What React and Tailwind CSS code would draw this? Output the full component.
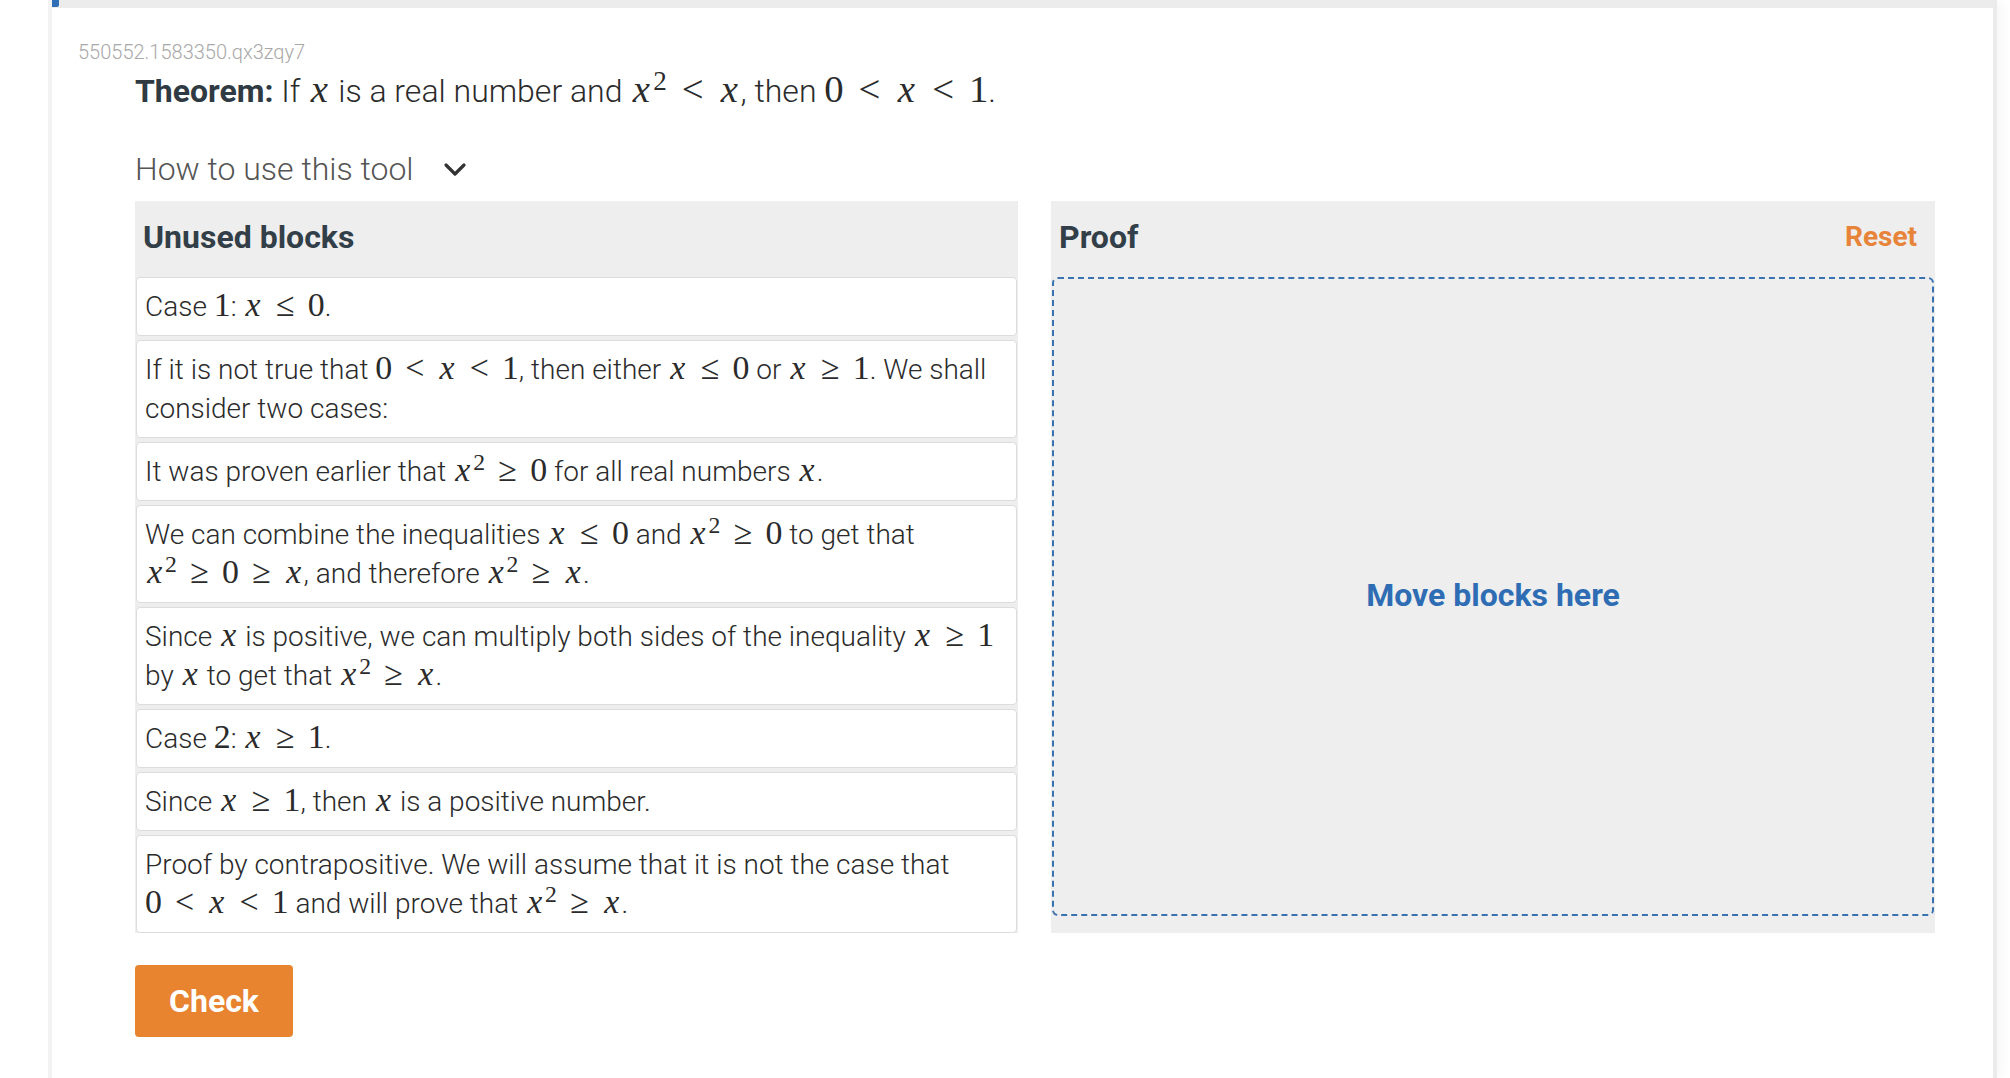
import React from "react";

function M({ t }) {
  const out = [];
  for (let i = 0; i < t.length; i++) {
    const c = t[i];
    if (c === " ") continue;
    if (c === "x") {
      out.push(
        <span key={i} className="italic inline-block w-[0.572em] text-center">
          x
        </span>
      );
    } else if (c === "^") {
      out.push(
        <span key={i} className="relative -top-[0.45em] text-[0.7em] ml-[0.03em]">
          {t[i + 1]}
        </span>
      );
      i++;
    } else if ("<≤≥".includes(c)) {
      out.push(
        <span key={i} className="inline-block w-[0.778em] mx-[0.2778em] text-center">
          {c}
        </span>
      );
    } else {
      out.push(<span key={i}>{c}</span>);
    }
  }
  return (
    <span className="whitespace-nowrap text-[1.21em] leading-none font-normal font-['Liberation_Serif','DejaVu_Serif',serif]">
      {out}
    </span>
  );
}

function Block({ children, last }) {
  return (
    <div
      className={
        "mx-[1px] bg-white border border-[#dcdcdc] rounded-[4px] pl-[8px] pr-[4px] py-[9px] text-[28px] leading-[39px] font-light text-[#2b2b2b] " +
        (last ? "" : "mb-[4px]")
      }
    >
      {children}
    </div>
  );
}

export default function App() {
  return (
    <div className="w-[2010px] h-[1078px] bg-white overflow-hidden font-['Roboto','Liberation_Sans',sans-serif]">
      <div className="ml-[48px] w-[1949px] h-full border-l-4 border-l-[#f3f3f3] border-r-4 border-r-[#ebebeb] shadow-[6px_0_10px_rgba(0,0,0,0.03)]">
        <div className="h-[8px] bg-[#ececec] flex">
          <div className="w-[7px] h-[7px] bg-[#2f6fb5] rounded-br-[2px]" />
        </div>
        <div className="pl-[26px] mt-[32px] text-[20px] leading-[24px] text-[#a8a8a8] font-light">
          550552.1583350.qx3zqy7
        </div>
        <div className="ml-[83px] w-[1800px]">
          <div className="mt-[6px] text-[32px] leading-[40px] text-[#2b2b2b] font-light">
            <span className="font-bold text-[#2f3a42]">Theorem:</span> If <M t="x" /> is a real number and{" "}
            <M t="x^2 < x" />, then <M t="0 < x < 1" />.
          </div>
          <div className="mt-[38px] h-[40px] flex items-center gap-[29px] text-[32px] font-light text-[#555]">
            <span>How to use this tool</span>
            <svg width="24" height="16" viewBox="0 0 24 16" className="mt-[2px]">
              <polyline points="3,3 12,12 21,3" fill="none" stroke="#333" strokeWidth="3.2" strokeLinecap="round" strokeLinejoin="round" />
            </svg>
          </div>
          <div className="mt-[12px] flex items-stretch gap-[33px]">
            <div className="w-[883px] bg-[#eeeeee]">
              <div className="h-[76px] pb-[5px] flex items-center pl-[8px] text-[32px] font-bold text-[#333f48]">
                Unused blocks
              </div>
              <Block>
                Case <M t="1" />: <M t="x ≤ 0" />.
              </Block>
              <Block>
                If it is not true that <M t="0 < x < 1" />, then either <M t="x ≤ 0" /> or <M t="x ≥ 1" />. We shall
                consider two cases:
              </Block>
              <Block>
                It was proven earlier that <M t="x^2 ≥ 0" /> for all real numbers <M t="x" />.
              </Block>
              <Block>
                We can combine the inequalities <M t="x ≤ 0" /> and <M t="x^2 ≥ 0" /> to get that{" "}
                <M t="x^2 ≥ 0 ≥ x" />, and therefore <M t="x^2 ≥ x" />.
              </Block>
              <Block>
                Since <M t="x" /> is positive, we can multiply both sides of the inequality <M t="x ≥ 1" /> by{" "}
                <M t="x" /> to get that <M t="x^2 ≥ x" />.
              </Block>
              <Block>
                Case <M t="2" />: <M t="x ≥ 1" />.
              </Block>
              <Block>
                Since <M t="x ≥ 1" />, then <M t="x" /> is a positive number.
              </Block>
              <Block last>
                Proof by contrapositive. We will assume that it is not the case that <M t="0 < x < 1" /> and will prove
                that <M t="x^2 ≥ x" />.
              </Block>
            </div>
            <div className="w-[884px] bg-[#eeeeee] flex flex-col pb-[17px]">
              <div className="h-[76px] pb-[5px] flex items-center justify-between pl-[8px] pr-[18px]">
                <span className="text-[32px] font-bold text-[#333f48]">Proof</span>
                <span className="text-[28px] font-bold text-[#e8843a]">Reset</span>
              </div>
              <div className="flex-1 mx-[1px] border-2 border-dashed border-[#3a72b0] rounded-[6px] flex items-center justify-center">
                <span className="text-[32px] font-bold text-[#2e6db4] mb-[4px]">Move blocks here</span>
              </div>
            </div>
          </div>
          <button className="mt-[32px] w-[158px] h-[72px] bg-[#e8832f] rounded-[4px] text-white font-bold text-[32px] flex items-center justify-center">
            Check
          </button>
        </div>
      </div>
    </div>
  );
}
